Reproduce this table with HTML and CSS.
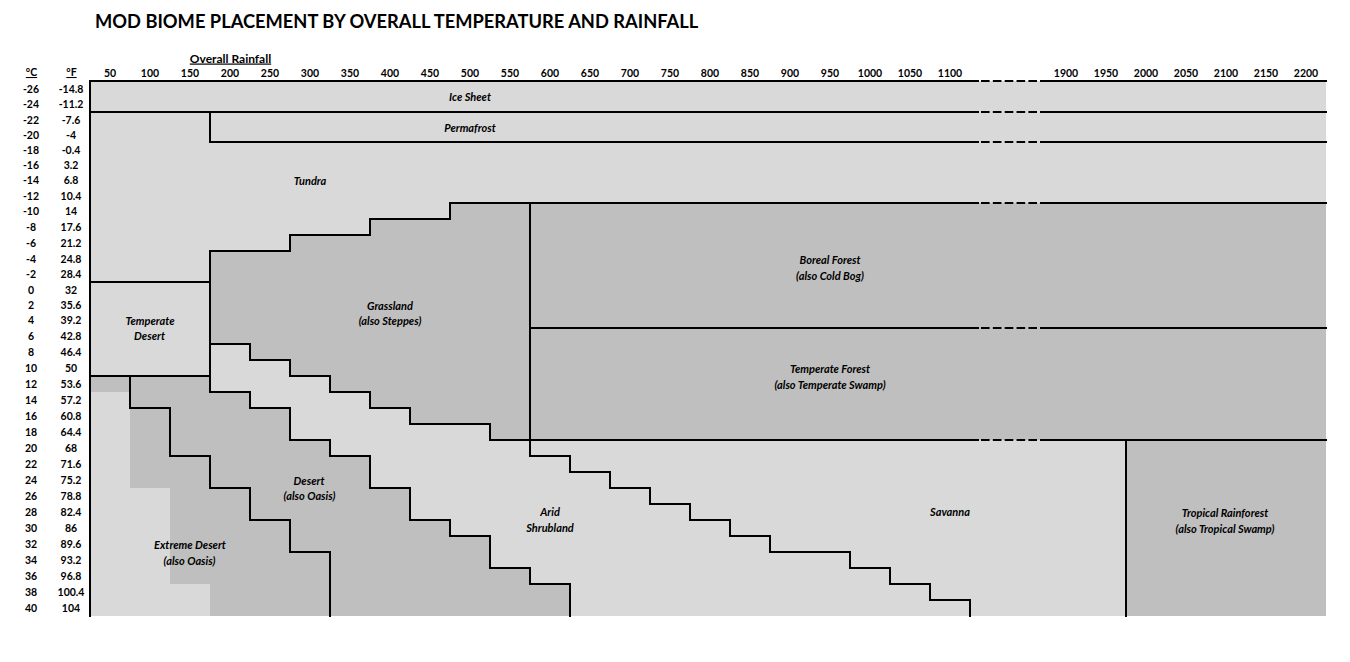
FILE: index.html
```html
<!DOCTYPE html>
<html lang="en">
<head>
<meta charset="utf-8">
<title>Mod Biome Placement</title>
<link rel="stylesheet" href="styles.css">
</head>
<body>
<h1 class="title">MOD BIOME PLACEMENT BY OVERALL TEMPERATURE AND RAINFALL</h1>
<svg class="chart" width="1350" height="622" viewBox="0 40 1350 622" xmlns="http://www.w3.org/2000/svg">
  <!-- fills -->
  <rect class="light" x="90" y="81" width="1236" height="535"/>
  <polygon class="dark" points="210,251 290,251 290,235 370,235 370,219 450,219 450,203 530,203 530,440 490,440 490,424 410,424 410,408 370,408 370,392 330,392 330,376 290,376 290,360 250,360 250,344 210,344"/>
  <rect class="dark" x="530" y="203" width="796" height="237"/>
  <rect class="dark" x="1126" y="440" width="200" height="176"/>
  <polygon class="dark" points="90,376 210,376 210,392 250,392 250,408 290,408 290,440 330,440 330,456 370,456 370,488 410,488 410,520 450,520 450,536 490,536 490,568 530,568 530,584 570,584 570,616 210,616 210,584 170,584 170,488 130,488 130,392 90,392"/>

  <!-- borders -->
  <g class="lines">
    <polyline points="90,616 90,81 978,81"/>
    <polyline points="1041,81 1326,81"/>
    <polyline points="90,112 978,112"/>
    <polyline points="1041,112 1326,112"/>
    <polyline points="210,112 210,142 978,142"/>
    <polyline points="1041,142 1326,142"/>
    <polyline points="90,282 210,282"/>
    <polyline points="210,392 210,251 290,251 290,235 370,235 370,219 450,219 450,203 978,203"/>
    <polyline points="1041,203 1326,203"/>
    <polyline points="90,376 210,376"/>
    <polyline points="210,344 250,344 250,360 290,360 290,376 330,376 330,392 370,392 370,408 410,408 410,424 490,424 490,440 978,440"/>
    <polyline points="1041,440 1326,440"/>
    <polyline points="530,328 978,328"/>
    <polyline points="1041,328 1326,328"/>
    <polyline points="530,203 530,456 570,456 570,472 610,472 610,488 650,488 650,504 690,504 690,520 730,520 730,536 770,536 770,552 850,552 850,568 890,568 890,584 930,584 930,600 970,600 970,616"/>
    <polyline points="210,392 250,392 250,408 290,408 290,440 330,440 330,456 370,456 370,488 410,488 410,520 450,520 450,536 490,536 490,568 530,568 530,584 570,584 570,616"/>
    <polyline points="130,376 130,408 170,408 170,456 210,456 210,488 250,488 250,520 290,520 290,552 330,552 330,616"/>
    <polyline points="1126,440 1126,616"/>
  </g>
  <g class="dashes">
    <line x1="981" y1="81" x2="1037" y2="81"/>
    <line x1="981" y1="112" x2="1037" y2="112"/>
    <line x1="981" y1="142" x2="1037" y2="142"/>
    <line x1="981" y1="203" x2="1037" y2="203"/>
    <line x1="981" y1="328" x2="1037" y2="328"/>
    <line x1="981" y1="440" x2="1037" y2="440"/>
  </g>

  <!-- axis headings -->
  <text class="ax u big" x="230.5" y="62.5">Overall Rainfall</text>
  <text class="ax u" x="31.5" y="76">°C</text>
  <text class="ax u" x="71.5" y="76">°F</text>

  <g class="ax">
    <text x="110" y="77">50</text><text x="150" y="77">100</text><text x="190" y="77">150</text>
    <text x="230" y="77">200</text><text x="270" y="77">250</text><text x="310" y="77">300</text>
    <text x="350" y="77">350</text><text x="390" y="77">400</text><text x="430" y="77">450</text>
    <text x="470" y="77">500</text><text x="510" y="77">550</text><text x="550" y="77">600</text>
    <text x="590" y="77">650</text><text x="630" y="77">700</text><text x="670" y="77">750</text>
    <text x="710" y="77">800</text><text x="750" y="77">850</text><text x="790" y="77">900</text>
    <text x="830" y="77">950</text><text x="870" y="77">1000</text><text x="910" y="77">1050</text>
    <text x="950" y="77">1100</text>
    <text x="1066" y="77">1900</text><text x="1106" y="77">1950</text><text x="1146" y="77">2000</text>
    <text x="1186" y="77">2050</text><text x="1226" y="77">2100</text><text x="1266" y="77">2150</text>
    <text x="1306" y="77">2200</text>
  </g>

  <g class="ax">
    <text x="31" y="92.75">-26</text><text x="71" y="92.75">-14.8</text>
    <text x="31" y="108.25">-24</text><text x="71" y="108.25">-11.2</text>
    <text x="31" y="123.5">-22</text><text x="71" y="123.5">-7.6</text>
    <text x="31" y="138.5">-20</text><text x="71" y="138.5">-4</text>
    <text x="31" y="153.5">-18</text><text x="71" y="153.5">-0.4</text>
    <text x="31" y="168.5">-16</text><text x="71" y="168.5">3.2</text>
    <text x="31" y="184">-14</text><text x="71" y="184">6.8</text>
    <text x="31" y="199.5">-12</text><text x="71" y="199.5">10.4</text>
    <text x="31" y="215">-10</text><text x="71" y="215">14</text>
    <text x="31" y="231">-8</text><text x="71" y="231">17.6</text>
    <text x="31" y="247">-6</text><text x="71" y="247">21.2</text>
    <text x="31" y="262.75">-4</text><text x="71" y="262.75">24.8</text>
    <text x="31" y="278.25">-2</text><text x="71" y="278.25">28.4</text>
    <text x="31" y="293.5">0</text><text x="71" y="293.5">32</text>
    <text x="31" y="308.75">2</text><text x="71" y="308.75">35.6</text>
    <text x="31" y="324.25">4</text><text x="71" y="324.25">39.2</text>
    <text x="31" y="340">6</text><text x="71" y="340">42.8</text>
    <text x="31" y="356">8</text><text x="71" y="356">46.4</text>
    <text x="31" y="372">10</text><text x="71" y="372">50</text>
    <text x="31" y="388">12</text><text x="71" y="388">53.6</text>
    <text x="31" y="404">14</text><text x="71" y="404">57.2</text>
    <text x="31" y="420">16</text><text x="71" y="420">60.8</text>
    <text x="31" y="436">18</text><text x="71" y="436">64.4</text>
    <text x="31" y="452">20</text><text x="71" y="452">68</text>
    <text x="31" y="468">22</text><text x="71" y="468">71.6</text>
    <text x="31" y="484">24</text><text x="71" y="484">75.2</text>
    <text x="31" y="500">26</text><text x="71" y="500">78.8</text>
    <text x="31" y="516">28</text><text x="71" y="516">82.4</text>
    <text x="31" y="532">30</text><text x="71" y="532">86</text>
    <text x="31" y="548">32</text><text x="71" y="548">89.6</text>
    <text x="31" y="564">34</text><text x="71" y="564">93.2</text>
    <text x="31" y="580">36</text><text x="71" y="580">96.8</text>
    <text x="31" y="596">38</text><text x="71" y="596">100.4</text>
    <text x="31" y="612">40</text><text x="71" y="612">104</text>
  </g>

  <!-- biome labels -->
  <g class="biome">
    <text x="470" y="101">Ice Sheet</text>
    <text x="470" y="132">Permafrost</text>
    <text x="310" y="184.5">Tundra</text>
    <text x="830" y="264">Boreal Forest</text>
    <text x="830" y="279.5">(also Cold Bog)</text>
    <text x="390" y="309.5">Grassland</text>
    <text x="390" y="325">(also Steppes)</text>
    <text x="150" y="324.5">Temperate</text>
    <text x="149.5" y="340">Desert</text>
    <text x="830" y="373">Temperate Forest</text>
    <text x="830" y="388.5">(also Temperate Swamp)</text>
    <text x="309" y="484.5">Desert</text>
    <text x="309.5" y="500">(also Oasis)</text>
    <text x="550" y="516">Arid</text>
    <text x="550" y="532">Shrubland</text>
    <text x="950" y="516">Savanna</text>
    <text x="1225" y="517">Tropical Rainforest</text>
    <text x="1225" y="532.5">(also Tropical Swamp)</text>
    <text x="190" y="549">Extreme Desert</text>
    <text x="189.5" y="564.5">(also Oasis)</text>
  </g>
</svg>
</body>
</html>
```

FILE: styles.css
```css
html, body {
  margin: 0;
  padding: 0;
  background: #ffffff;
}

body {
  width: 1350px;
  height: 662px;
  overflow: hidden;
  font-family: Lato, "Liberation Sans", sans-serif;
  color: #000;
}

.title {
  margin: 0;
  height: 30px;
  padding: 10px 0 0 95px;
  font-family: Lato, "Liberation Sans", sans-serif;
  font-weight: 700;
  font-size: 18.3px;
  line-height: 22px;
  letter-spacing: 0;
  color: #000;
}

.chart {
  display: block;
}

.light {
  fill: #d9d9d9;
}

.dark {
  fill: #bfbfbf;
}

.lines polyline {
  fill: none;
  stroke: #000;
  stroke-width: 2;
  stroke-linecap: square;
  stroke-linejoin: miter;
}

.dashes line {
  stroke: #000;
  stroke-width: 2;
  stroke-dasharray: 8.6 3.25;
}

.ax,
.ax text {
  font-family: Lato, "Liberation Sans", sans-serif;
  font-weight: 700;
  font-size: 10.5px;
  text-anchor: middle;
  fill: #000;
}

.ax.big {
  font-size: 12px;
}

.u {
  text-decoration: underline;
}

.biome text {
  font-family: Lato, "Liberation Sans", sans-serif;
  font-weight: 700;
  font-style: italic;
  font-size: 11px;
  text-anchor: middle;
  fill: #000;
}
```
